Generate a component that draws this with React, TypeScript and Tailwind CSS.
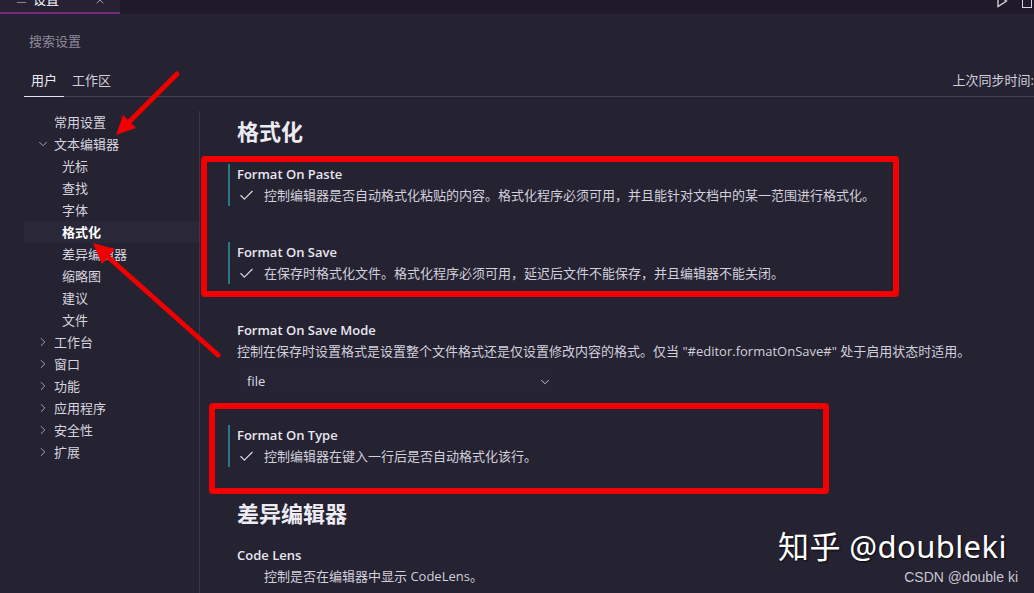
import { Check, ChevronDown, ChevronRight, X } from "lucide-react";
import clsx from "clsx";

type Node = { label: string; level: 0 | 1; chevron?: "down" | "right"; active?: boolean };

const tree: Node[] = [
  { label: "常用设置", level: 0 },
  { label: "文本编辑器", level: 0, chevron: "down" },
  { label: "光标", level: 1 },
  { label: "查找", level: 1 },
  { label: "字体", level: 1 },
  { label: "格式化", level: 1, active: true },
  { label: "差异编辑器", level: 1 },
  { label: "缩略图", level: 1 },
  { label: "建议", level: 1 },
  { label: "文件", level: 1 },
  { label: "工作台", level: 0, chevron: "right" },
  { label: "窗口", level: 0, chevron: "right" },
  { label: "功能", level: 0, chevron: "right" },
  { label: "应用程序", level: 0, chevron: "right" },
  { label: "安全性", level: 0, chevron: "right" },
  { label: "扩展", level: 0, chevron: "right" },
];

function TreeRow({ node }: { node: Node }) {
  return (
    <div
      className={clsx(
        "flex h-[22px] items-center text-[13px] leading-[22px]",
        node.level === 0 ? "pl-[12px]" : "pl-[38px]",
        node.active ? "bg-[#2a2738] font-bold text-white" : "text-[#d6d4de]"
      )}
    >
      {node.level === 0 && (
        <span className="mr-[4px] flex w-[14px] items-center justify-center text-[#c2bfcb]">
          {node.chevron === "down" && <ChevronDown size={14} strokeWidth={1.4} />}
          {node.chevron === "right" && <ChevronRight size={14} strokeWidth={1.4} />}
        </span>
      )}
      {node.label}
    </div>
  );
}

interface SettingProps {
  title: string;
  desc: string;
  checkbox?: boolean;
  checked?: boolean;
  modified?: boolean;
  className?: string;
  children?: React.ReactNode;
}

function Setting({ title, desc, checkbox, checked, modified, className, children }: SettingProps) {
  return (
    <div className={clsx(className)}>
      <div className={clsx("border-l-2 pl-[7px]", modified ? "border-[#2a7887]" : "border-transparent")}>
        <div className="h-[20px] text-[13px] font-semibold leading-[20px] text-[#e8e6ee]">{title}</div>
        <div className="flex h-[22px] items-center text-[13px] leading-[22px] text-[#d2d0da]">
          {checkbox && (
            <span className="mr-[9px] flex w-[18px] items-center justify-center text-[#e0dee7]">
              {checked && <Check size={17} strokeWidth={1.6} />}
            </span>
          )}
          <span>{desc}</span>
        </div>
      </div>
      {children}
    </div>
  );
}

export default function App() {
  return (
    <div className="relative h-[593px] w-[1034px] overflow-hidden bg-[#252232] font-['Open_Sans','Noto_Sans_CJK_SC',sans-serif]">
      {/* editor tab strip, cut at the top */}
      <div className="flex h-[14px] bg-[#1f1a29]">
        <div className="flex h-[14px] w-[120px] items-start overflow-hidden border-b-2 border-[#7c2a80] bg-[#262233] pl-[15px]">
          <span className="-mt-[10px] mr-[5px] text-[13px] text-[#9c98a8]">≡</span>
          <span className="-mt-[10px] text-[13px] text-white">设置</span>
          <span className="-mt-[6px] ml-auto mr-[14px] text-[#cfcbd8]">
            <X size={12} strokeWidth={1.5} />
          </span>
        </div>
        <div className="ml-auto flex items-start gap-[14px] pr-[2px]">
          <span className="-mt-[6px] text-[#d8d5e0]">
            <svg width="12" height="14" viewBox="0 0 12 14" fill="none" stroke="currentColor" strokeWidth="1.3">
              <path d="M2 1.5v11l8.5-5.5z" />
            </svg>
          </span>
          <span className="-mt-[4px] h-[12px] w-[10px] border border-[#d8d5e0]" />
        </div>
      </div>

      {/* search + scope tabs */}
      <div className="pl-[29px] pt-[18px] text-[13px] leading-[18px] text-[#8d899a]">搜索设置</div>
      <div className="ml-[24px] mt-[21px] flex border-b border-[#454057] text-[13px] leading-[18px]">
        <div className="-mb-px border-b border-[#e6e3ee] px-[7px] pb-[7px] text-[#eceaf2]">用户</div>
        <div className="px-[8px] pb-[7px] text-[#d3d0dc]">工作区</div>
        <div className="ml-auto whitespace-nowrap pb-[7px] text-[#d3d0dc]">上次同步时间:</div>
      </div>

      {/* body */}
      <div className="flex h-full pt-[14px]">
        <div className="w-[200px] shrink-0 border-r border-[#3a3649] pl-[24px]">
          {tree.map((n) => (
            <TreeRow key={n.label} node={n} />
          ))}
        </div>
        <div className="flex-1 pl-[28px]">
          <h2 className="mt-[5px] pl-[9px] text-[22px] font-bold leading-[30px] text-[#ecebf2]">格式化</h2>
          <Setting
            className="mt-[18px]"
            title="Format On Paste"
            desc="控制编辑器是否自动格式化粘贴的内容。格式化程序必须可用，并且能针对文档中的某一范围进行格式化。"
            checkbox
            checked
            modified
          />
          <Setting
            className="mt-[36px]"
            title="Format On Save"
            desc="在保存时格式化文件。格式化程序必须可用，延迟后文件不能保存，并且编辑器不能关闭。"
            checkbox
            checked
            modified
          />
          <Setting
            className="mt-[36px]"
            title="Format On Save Mode"
            desc={'控制在保存时设置格式是设置整个文件格式还是仅设置修改内容的格式。仅当 "#editor.formatOnSave#" 处于启用状态时适用。'}
          >
            <div className="ml-[9px] mt-[7px] flex h-[26px] w-[321px] items-center justify-between bg-[#262335] pl-[10px] pr-[6px] text-[13px] text-[#dddbe4]">
              <span>file</span>
              <ChevronDown size={14} strokeWidth={1.5} />
            </div>
          </Setting>
          <Setting
            className="mt-[30px]"
            title="Format On Type"
            desc="控制编辑器在键入一行后是否自动格式化该行。"
            checkbox
            checked
            modified
          />
          <h2 className="mt-[31px] pl-[9px] text-[22px] font-bold leading-[30px] text-[#ecebf2]">差异编辑器</h2>
          <Setting className="mt-[17px]" title="Code Lens" desc="控制是否在编辑器中显示 CodeLens。" checkbox />
        </div>
      </div>

      {/* red annotation boxes */}
      <div className="pointer-events-none absolute left-[201px] top-[156px] h-[141px] w-[698px] rounded-[4px] border-[6px] border-[#f30000]" />
      <div className="pointer-events-none absolute left-[209px] top-[403px] h-[91px] w-[620px] rounded-[4px] border-[6px] border-[#f30000]" />

      {/* red arrows */}
      <svg className="pointer-events-none absolute left-0 top-0" width="1034" height="593">
        <line x1="177" y1="74" x2="128" y2="123" stroke="#f00000" strokeWidth="5" strokeLinecap="round" />
        <polygon points="116,135 136,128 123,115" fill="#f00000" />
        <line x1="218" y1="355" x2="108" y2="257" stroke="#f00000" strokeWidth="5" strokeLinecap="round" />
        <polygon points="93,243 115,249 102,264" fill="#f00000" />
      </svg>

      {/* watermarks */}
      <div className="pointer-events-none absolute left-[778px] top-[527px] font-['Noto_Sans','Noto_Sans_CJK_SC',sans-serif] text-[31px] leading-[38px] tracking-[0.4px] text-white [text-shadow:1px_1px_2px_rgba(0,0,0,0.8)]">
        知乎 @doubleki
      </div>
      <div className="pointer-events-none absolute right-[16px] top-[568px] font-['Liberation_Sans',sans-serif] text-[14px] leading-[18px] text-[#c9c7d2]">
        CSDN @double ki
      </div>
    </div>
  );
}
